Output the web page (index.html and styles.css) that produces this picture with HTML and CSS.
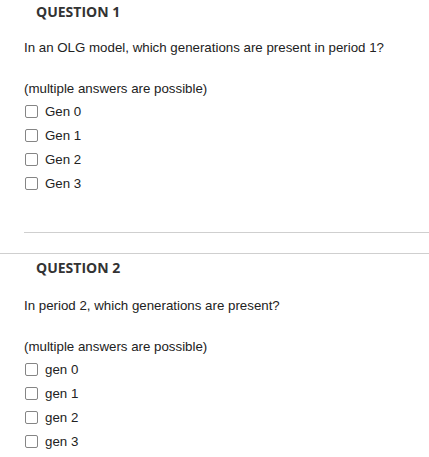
FILE: index.html
```html
<!DOCTYPE html>
<html>
<head>
<meta charset="utf-8">
<link rel="stylesheet" href="styles.css">
</head>
<body>
<section class="question">
  <h2 class="q-title">QUESTION 1</h2>
  <p class="q-text">In an OLG model, which generations are present in period 1?</p>
  <p class="q-hint">(multiple answers are possible)</p>
  <ul class="answers">
    <li><span class="box"></span><span>Gen 0</span></li>
    <li><span class="box"></span><span>Gen 1</span></li>
    <li><span class="box"></span><span>Gen 2</span></li>
    <li><span class="box"></span><span>Gen 3</span></li>
  </ul>
  <hr class="inner-rule">
</section>
<section class="question second">
  <h2 class="q-title">QUESTION 2</h2>
  <p class="q-text">In period 2, which generations are present?</p>
  <p class="q-hint">(multiple answers are possible)</p>
  <ul class="answers">
    <li><span class="box"></span><span>gen 0</span></li>
    <li><span class="box"></span><span>gen 1</span></li>
    <li><span class="box"></span><span>gen 2</span></li>
    <li><span class="box"></span><span>gen 3</span></li>
  </ul>
</section>
</body>
</html>
```
FILE: styles.css
```css
html, body {
  margin: 0;
  padding: 0;
  background: #fff;
}
body {
  font-family: "Liberation Sans", Arial, sans-serif;
  font-size: 13.3px;
  color: #222;
}
.question {
  display: flex;
  flex-direction: column;
}
.second {
  border-top: 1px solid #cfcfcf;
  padding-top: 2px;
}
.q-title {
  margin: 0;
  padding: 2px 0 0 36px;
  font-family: "Open Sans", sans-serif;
  font-weight: 700;
  font-size: 14px;
  line-height: 20px;
  color: #333;
}
.q-text {
  margin: 17px 0 0 24px;
  line-height: 18px;
}
.second .q-text {
  margin-top: 19px;
}
.q-hint {
  margin: 23px 0 0 24px;
  line-height: 18px;
}
.answers {
  list-style: none;
  margin: 1px 0 0 25px;
  padding: 0;
  display: flex;
  flex-direction: column;
}
.answers li {
  display: flex;
  align-items: center;
  gap: 7px;
  height: 24px;
}
.box {
  width: 11px;
  height: 11px;
  border: 1px solid #858585;
  border-radius: 2px;
  background: #fff;
}
.inner-rule {
  margin: 37px 0 20px 24px;
  border: 0;
  border-top: 1px solid #cfcfcf;
}
```
